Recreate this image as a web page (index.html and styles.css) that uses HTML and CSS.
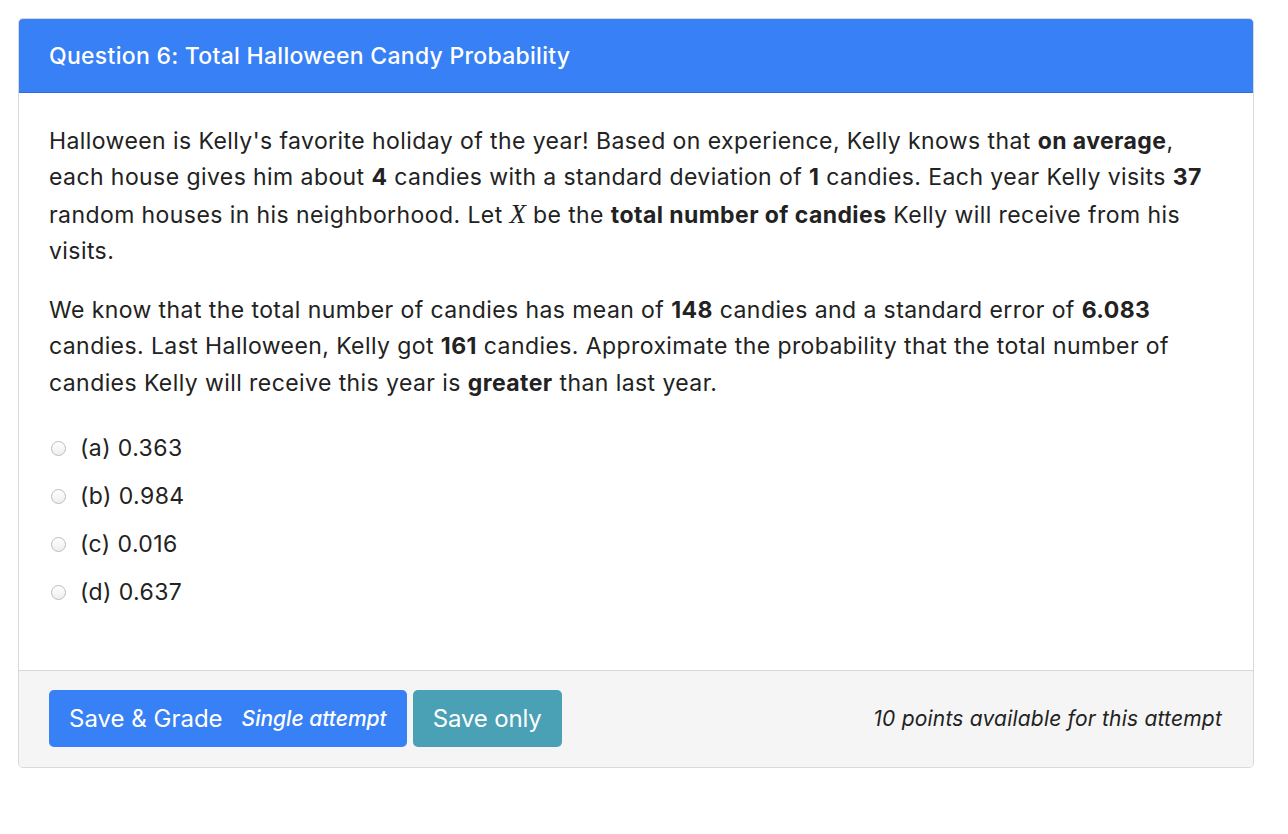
FILE: index.html
```html
<!DOCTYPE html>
<html>
<head>
<meta charset="utf-8">
<link rel="stylesheet" href="styles.css">
</head>
<body>
<div class="card">
  <div class="card-header">Question 6: Total Halloween Candy Probability</div>
  <div class="card-body">
    <p>Halloween is Kelly's favorite holiday of the year! Based on experience, Kelly knows that <b>on average</b>, each house gives him about <b>4</b> candies with a standard deviation of <b>1</b> candies. Each year Kelly visits <b>37</b> random houses in his neighborhood. Let <span class="math">X</span> be the <b>total number of candies</b> Kelly will receive from his visits.</p>
    <p>We know that the total number of candies has mean of <b>148</b> candies and a standard error of <b>6.083</b> candies. Last Halloween, Kelly got <b>161</b> candies. Approximate the probability that the total number of candies Kelly will receive this year is <b>greater</b> than last year.</p>
    <div class="options">
      <label class="option"><span class="radio"></span>(a) 0.363</label>
      <label class="option"><span class="radio"></span>(b) 0.984</label>
      <label class="option"><span class="radio"></span>(c) 0.016</label>
      <label class="option"><span class="radio"></span>(d) 0.637</label>
    </div>
  </div>
  <div class="card-footer">
    <div class="buttons">
      <button class="btn btn-primary">Save &amp; Grade <i class="sub">Single attempt</i></button>
      <button class="btn btn-info">Save only</button>
    </div>
    <i class="points">10 points available for this attempt</i>
  </div>
</div>
</body>
</html>
```
FILE: styles.css
```css
html, body {
  margin: 0;
  padding: 0;
  background: #ffffff;
}
body {
  padding: 18px 34px 18px 18px;
  font-family: "Inter", "Noto Sans", sans-serif;
  color: #222222;
}
.card {
  border: 1px solid #d9d9d9;
  border-radius: 5px;
  overflow: hidden;
}
.card-header {
  background: #3780f5;
  color: #ffffff;
  font-size: 23px;
  letter-spacing: 0.28px;
  font-weight: 500;
  height: 73px;
  display: flex;
  align-items: center;
  padding: 0 30px;
  border-bottom: 1px solid #2f6fd6;
}
.card-body {
  padding: 30px 30px 54px 30px;
  font-size: 23px;
  letter-spacing: 0.42px;
  line-height: 36.3px;
}
.card-body p {
  margin: 0 0 23px 0;
}
.card-body b {
  font-weight: 700;
}
.math {
  font-family: "Liberation Serif", serif;
  font-style: italic;
  font-size: 27px;
  letter-spacing: 0;
}
.options {
  display: flex;
  flex-direction: column;
}
.option {
  display: flex;
  align-items: center;
  height: 48px;
}
.radio {
  width: 15px;
  height: 15px;
  border: 1px solid #bcbcbc;
  border-radius: 50%;
  margin: 0 14px 0 2px;
  background: linear-gradient(#ffffff, #eeeeee);
  box-sizing: border-box;
  flex: none;
}
.card-footer {
  background: #f5f5f5;
  border-top: 1px solid #d9d9d9;
  padding: 19px 30px 20px 30px;
  display: flex;
  align-items: center;
  justify-content: space-between;
}
.buttons {
  display: flex;
  gap: 6px;
}
.btn {
  font-family: "Inter", "Noto Sans", sans-serif;
  color: #ffffff;
  border: none;
  border-radius: 5px;
  height: 57px;
  font-size: 24px;
  letter-spacing: 0;
  padding: 0 20px;
  display: flex;
  align-items: center;
}
.btn-primary {
  background: #3780f5;
}
.btn-info {
  background: #4aa0b5;
  letter-spacing: -0.15px;
}
.sub {
  font-size: 21px;
  letter-spacing: 0;
  margin-left: 19px;
  font-weight: 500;
}
.points {
  font-size: 21px;
  letter-spacing: 0.2px;
  color: #222222;
  margin-right: 1px;
}
```
